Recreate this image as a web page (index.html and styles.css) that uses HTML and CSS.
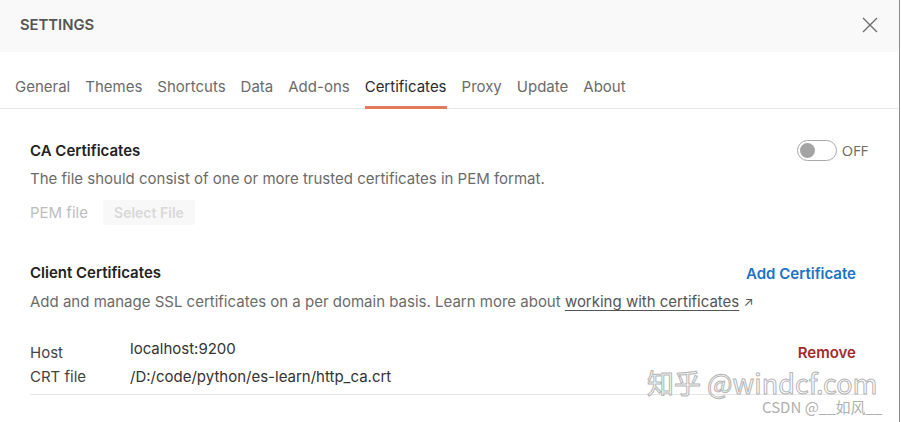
FILE: index.html
```html
<!DOCTYPE html>
<html>
<head>
<meta charset="utf-8">
<link rel="stylesheet" href="styles.css">
</head>
<body>
<div class="modal">
  <div class="header">
    <div class="title">SETTINGS</div>
    <svg class="close" width="16" height="16" viewBox="0 0 16 16"><path d="M1 1 L15 15 M15 1 L1 15" stroke="#6b6b6b" stroke-width="1.3" fill="none"/></svg>
  </div>
  <div class="tabs">
    <div class="tab">General</div>
    <div class="tab">Themes</div>
    <div class="tab">Shortcuts</div>
    <div class="tab">Data</div>
    <div class="tab">Add-ons</div>
    <div class="tab active">Certificates</div>
    <div class="tab">Proxy</div>
    <div class="tab">Update</div>
    <div class="tab">About</div>
  </div>
  <div class="content">
    <section class="ca">
      <div class="row-head">
        <div class="sec-title">CA Certificates</div>
        <div class="toggle-wrap"><span class="toggle"><span class="knob"></span></span><span class="off">OFF</span></div>
      </div>
      <div class="desc">The file should consist of one or more trusted certificates in PEM format.</div>
      <div class="pem-row">
        <span class="pem-label">PEM file</span>
        <span class="select-btn">Select File</span>
      </div>
    </section>
    <section class="client">
      <div class="row-head client-head">
        <div class="sec-title">Client Certificates</div>
        <div class="add">Add Certificate</div>
      </div>
      <div class="desc">Add and manage SSL certificates on a per domain basis. Learn more about <span class="link">working with certificates</span> <span class="arrow">↗</span></div>
      <div class="cert">
        <div class="cert-info">
          <div class="kv"><span class="k">Host</span><span class="v host">localhost:9200</span></div>
          <div class="kv"><span class="k">CRT file</span><span class="v">/D:/code/python/es-learn/http_ca.crt</span></div>
        </div>
        <div class="remove">Remove</div>
      </div>
    </section>
  </div>
  <div class="wm1">知乎 @windcf.com</div>
  <div class="wm2">CSDN @__如风__</div>
</div>
</body>
</html>
```
FILE: styles.css
```css
* { box-sizing: border-box; }
html, body { margin: 0; padding: 0; background: #fff; }
body { width: 901px; height: 422px; overflow: hidden; font-family: Inter, "Noto Sans", sans-serif; }
.modal { position: relative; width: 900px; height: 422px; border-right: 1px solid #8c8c8c; background: #fff; overflow: hidden; }
.header { height: 52px; background: #f9f9f9; display: flex; align-items: center; justify-content: space-between; padding: 0 21px 2px 20px; }
.title { font-size: 14.8px; font-weight: 600; color: #555; }
.close { display: block; }
.tabs { display: flex; gap: 15px; padding: 0 15px; height: 57px; border-bottom: 1px solid #e6e6e6; }
.tab { height: 57px; padding-top: 15px; display: flex; align-items: center; font-size: 15px; color: #6b6b6b; border-bottom: 3px solid transparent; }
.tab.active { color: #2b2b2b; border-bottom-color: #e57a5a; }
.content { padding: 0 31px 0 30px; }
.row-head { display: flex; justify-content: space-between; align-items: center; }
.ca { padding-top: 31px; }
.sec-title { font-size: 15px; font-weight: 600; color: #222; line-height: 20px; }
.toggle-wrap { display: flex; align-items: center; gap: 5px; }
.toggle { width: 40px; height: 21px; border: 1px solid #a8a8a8; border-radius: 11px; display: flex; align-items: center; padding-left: 2px; margin-left: -1px; }
.knob { width: 15px; height: 15px; border-radius: 50%; background: #a4a4a4; }
.off { font-size: 14.5px; color: #6b6b6b; font-family: "Open Sans", sans-serif; }
.desc { font-size: 15px; color: #6b6b6b; line-height: 20px; margin-top: 8px; }
.link { text-decoration: underline; text-underline-offset: 3px; color: #555; }
.arrow { font-size: 13px; color: #555; }
.pem-row { display: flex; align-items: center; gap: 15px; margin-top: 11px; }
.pem-label { font-size: 15px; color: #bdbdbd; line-height: 20px; }
.select-btn { width: 92px; height: 25px; background: #f8f8f8; border-radius: 3px; color: #d9d9d9; font-size: 14px; font-weight: 600; display: flex; align-items: center; justify-content: center; }
.client { padding-top: 38px; }
.client-head { padding-right: 12px; }
.client .desc { margin-top: 9px; }
.add { font-size: 15px; font-weight: 600; color: #1b72c6; }
.cert { display: flex; justify-content: space-between; align-items: flex-start; margin-top: 29px; padding-bottom: 5px; border-bottom: 1px solid #e6e6e6; padding-right: 12px; }
.kv { display: flex; font-size: 15px; color: #333; line-height: 24px; }
.k { width: 100px; color: #444; }
.v { color: #333; }
.host { position: relative; top: -4px; }
.remove { font-size: 15px; font-weight: 600; color: #a32b2b; line-height: 24px; }
.wm1 { position: absolute; left: 647px; top: 369px; white-space: nowrap; font-size: 27px; font-family: "Noto Sans CJK SC", sans-serif; color: rgba(255,255,255,0.6); -webkit-text-stroke: 1px #b5b5b5; line-height: 28px; }
.wm2 { position: absolute; left: 762px; top: 398px; white-space: nowrap; font-size: 15px; font-family: "Noto Sans CJK SC", sans-serif; color: #b0b0b0; line-height: 18px; }
```
